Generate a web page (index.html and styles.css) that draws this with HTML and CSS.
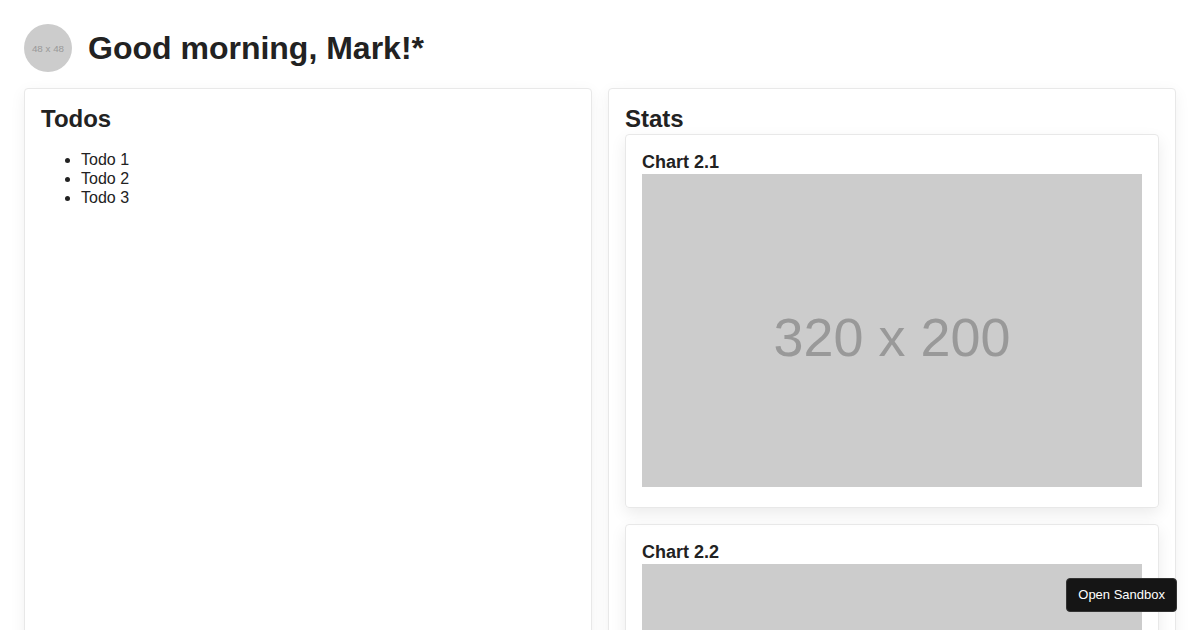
FILE: index.html
```html
<!DOCTYPE html>
<html lang="en">
<head>
    <meta charset="UTF-8">
    <meta name="viewport" content="width=device-width, initial-scale=1.0">
    <title>Dashboard</title>
    <link rel="stylesheet" href="styles.css">
</head>
<body>
    <header class="header">
        <svg class="avatar" width="48" height="48" viewBox="0 0 48 48">
            <rect width="48" height="48" fill="#cccccc"/>
            <text x="24" y="27.5" text-anchor="middle" font-family="Liberation Sans, Arial, sans-serif" font-size="9.8" fill="#999999">48 x 48</text>
        </svg>
        <h1>Good morning, Mark!*</h1>
    </header>

    <main class="grid">
        <section class="card">
            <h2>Todos</h2>
            <ul>
                <li>Todo 1</li>
                <li>Todo 2</li>
                <li>Todo 3</li>
            </ul>
        </section>

        <section class="card">
            <h2>Stats</h2>
            <div class="chart">
                <h3>Chart 2.1</h3>
                <svg class="placeholder" viewBox="0 0 320 200" preserveAspectRatio="none">
                    <rect width="320" height="200" fill="#cccccc"/>
                    <text x="160" y="116.5" text-anchor="middle" font-family="Liberation Sans, Arial, sans-serif" font-size="34.5" fill="#999999">320 x 200</text>
                </svg>
            </div>
            <div class="chart">
                <h3>Chart 2.2</h3>
                <svg class="placeholder" viewBox="0 0 320 200" preserveAspectRatio="none">
                    <rect width="320" height="200" fill="#cccccc"/>
                    <text x="160" y="116.5" text-anchor="middle" font-family="Liberation Sans, Arial, sans-serif" font-size="34.5" fill="#999999">320 x 200</text>
                </svg>
            </div>
        </section>
    </main>

    <button class="sandbox">Open Sandbox</button>
</body>
</html>
```

FILE: styles.css
```css
body {
    font-family: "Liberation Sans", Arial, sans-serif;
    color: #222;
    background: #fff;
    margin: 0;
    padding: 24px;
}
.header {
    display: flex;
    align-items: center;
    gap: 16px;
    margin-bottom: 16px;
}
.avatar {
    border-radius: 50%;
    display: block;
}
h1 {
    font-size: 32px;
    margin: 0;
    line-height: 1.2;
}
.grid {
    display: grid;
    grid-template-columns: 1fr 1fr;
    gap: 16px;
}
.card {
    border: 1px solid #e8e8e8;
    border-radius: 4px;
    padding: 16px;
    background: #fff;
    box-shadow: 0 4px 16px rgba(0, 0, 0, 0.06);
    min-height: 700px;
}
h2 {
    font-size: 24px;
    line-height: 1.2;
    margin: 0;
}
ul {
    margin: 16px 0;
    padding-left: 40px;
    line-height: 19px;
}
.chart {
    border: 1px solid #e8e8e8;
    border-radius: 4px;
    padding: 16px;
    margin-bottom: 16px;
    box-shadow: 0 6px 16px rgba(0, 0, 0, 0.08);
}
h3 {
    font-size: 18px;
    line-height: 22px;
    margin: 0 0 1px;
}
.placeholder {
    width: 100%;
    height: 313px;
}
.sandbox {
    position: fixed;
    right: 23px;
    bottom: 18px;
    background: #151515;
    color: #fff;
    border: 1px solid #333;
    border-radius: 4px;
    font-family: "Liberation Sans", Arial, sans-serif;
    font-size: 13px;
    padding: 8px 11px 9px;
    cursor: pointer;
}
```
